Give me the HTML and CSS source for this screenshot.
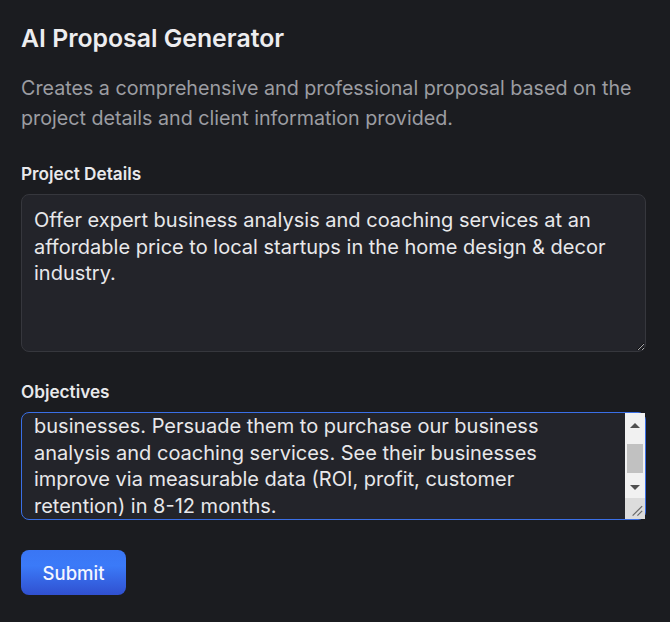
FILE: index.html
```html
<!DOCTYPE html>
<html lang="en">
<head>
<meta charset="utf-8">
<title>AI Proposal Generator</title>
<link rel="stylesheet" href="styles.css">
</head>
<body>
<main class="page">
  <h1 class="title">AI Proposal Generator</h1>
  <p class="desc">Creates a comprehensive and professional proposal based on the project details and client information provided.</p>
  <form class="form">
    <label class="field">
      <span class="label">Project Details</span>
      <textarea class="input input-details">Offer expert business analysis and coaching services at an affordable price to local startups in the home design &amp; decor industry.</textarea>
    </label>
    <label class="field">
      <span class="label">Objectives</span>
      <span class="scroll-field">
        <textarea id="objectives" class="input input-objectives is-focused">Reach out to local startups in the home design &amp; decor industry and build trust with the owners of these new businesses. Persuade them to purchase our business analysis and coaching services. See their businesses improve via measurable data (ROI, profit, customer retention) in 8-12 months.
</textarea>
        <span class="scrollbar" aria-hidden="true">
          <span class="sb-btn"><span class="arrow-up"></span></span>
          <span class="sb-track"><span class="sb-thumb"></span></span>
          <span class="sb-btn sb-btn-down"><span class="arrow-down"></span></span>
          <span class="sb-corner">
            <svg width="21" height="21" viewBox="0 0 21 21"><path d="M18 8 L8 18 M18 13 L13 18" stroke="#6b6b6b" stroke-width="1.3" fill="none"/></svg>
          </span>
        </span>
      </span>
    </label>
    <div class="actions">
      <button type="button" class="btn">Submit</button>
    </div>
  </form>
</main>
<script src="script.js"></script>
</body>
</html>
```

FILE: styles.css
```css
html, body {
  margin: 0;
  padding: 0;
  background: #1b1c20;
}
body {
  font-family: Inter, "Noto Sans", "Liberation Sans", sans-serif;
  color: #ececee;
}
.page {
  padding: 22px 20px 0 21px;
}
.title {
  margin: 0;
  font-size: 24.8px;
  line-height: 32px;
  font-weight: 600;
  color: #ededef;
}
.desc {
  margin: 19px 0 0;
  font-size: 19.7px;
  line-height: 30px;
  color: #9c9da2;
}
.form {
  margin-top: 30px;
  display: flex;
  flex-direction: column;
  gap: 29px;
}
.field {
  display: flex;
  flex-direction: column;
  gap: 9px;
}
.label {
  font-size: 17.2px;
  line-height: 22px;
  font-weight: 600;
  color: #e9e9eb;
}
.input {
  display: block;
  box-sizing: border-box;
  width: 625px;
  margin: 0;
  padding: 12px 12px;
  background: #23242a;
  border: 1px solid #36373d;
  border-radius: 8px;
  color: #e8e8ea;
  font-family: Inter, "Noto Sans", "Liberation Sans", sans-serif;
  font-size: 20px;
  line-height: 26.6px;
  outline: none;
  resize: both;
}
.input-details {
  height: 158px;
}
.scroll-field {
  position: relative;
  display: block;
  width: 625px;
}
.input-objectives {
  height: 108px;
  overflow: hidden;
  padding-right: 42px;
  resize: none;
}
.is-focused {
  border-color: #3a6fe6;
}
.scrollbar {
  position: absolute;
  top: 1px;
  right: 1px;
  bottom: 1px;
  width: 20px;
  display: flex;
  flex-direction: column;
  background: #f1f1f1;
}
.sb-btn {
  height: 24px;
  display: flex;
  align-items: center;
  justify-content: center;
}
.sb-btn-down {
  height: 22px;
}
.arrow-up, .arrow-down {
  width: 0;
  height: 0;
  border-left: 5px solid transparent;
  border-right: 5px solid transparent;
}
.arrow-up {
  border-bottom: 5px solid #505050;
}
.arrow-down {
  border-top: 5px solid #505050;
}
.sb-track {
  height: 39px;
  display: flex;
  flex-direction: column;
  align-items: center;
}
.sb-thumb {
  margin-top: 7px;
  width: 16px;
  height: 29px;
  background: #c1c1c1;
}
.sb-corner {
  height: 21px;
  background: #dcdcdc;
  display: flex;
}
.actions {
  margin-top: 1px;
}
.btn {
  width: 105px;
  height: 45px;
  border: none;
  border-radius: 8px;
  background: linear-gradient(180deg, #3a76f4 0%, #3b7af8 35%, #3050d0 100%);
  color: #f4f6ff;
  font-family: Inter, "Noto Sans", "Liberation Sans", sans-serif;
  font-size: 18.5px;
  font-weight: 500;
  cursor: pointer;
}
```

FILE: script.js
```js
var t = document.getElementById('objectives');
t.scrollTop = 65;
```
